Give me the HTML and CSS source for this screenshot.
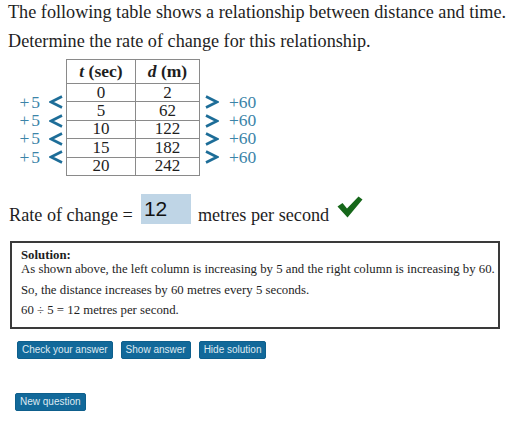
FILE: index.html
```html
<!DOCTYPE html>
<html>
<head>
<meta charset="utf-8">
<link rel="stylesheet" href="styles.css">
</head>
<body>
<div class="page">
  <p class="q q1">The following table shows a relationship between distance and time.</p>
  <p class="q q2">Determine the rate of change for this relationship.</p>

  <div class="tablewrap">
    <div class="side left">
      <div class="step"><span class="lbl">+5</span><svg class="chev" viewBox="0 0 14 14"><polyline points="13,1.5 2,7 13,12.5"/></svg></div>
      <div class="step"><span class="lbl">+5</span><svg class="chev" viewBox="0 0 14 14"><polyline points="13,1.5 2,7 13,12.5"/></svg></div>
      <div class="step"><span class="lbl">+5</span><svg class="chev" viewBox="0 0 14 14"><polyline points="13,1.5 2,7 13,12.5"/></svg></div>
      <div class="step"><span class="lbl">+5</span><svg class="chev" viewBox="0 0 14 14"><polyline points="13,1.5 2,7 13,12.5"/></svg></div>
    </div>
    <table class="data">
      <thead>
        <tr><th><i>t</i> (sec)</th><th><i>d</i> (m)</th></tr>
      </thead>
      <tbody>
        <tr><td>0</td><td>2</td></tr>
        <tr><td>5</td><td>62</td></tr>
        <tr><td>10</td><td>122</td></tr>
        <tr><td>15</td><td>182</td></tr>
        <tr><td>20</td><td>242</td></tr>
      </tbody>
    </table>
    <div class="side right">
      <div class="step"><svg class="chev" viewBox="0 0 14 14"><polyline points="1,1.5 12,7 1,12.5"/></svg><span class="lbl">+60</span></div>
      <div class="step"><svg class="chev" viewBox="0 0 14 14"><polyline points="1,1.5 12,7 1,12.5"/></svg><span class="lbl">+60</span></div>
      <div class="step"><svg class="chev" viewBox="0 0 14 14"><polyline points="1,1.5 12,7 1,12.5"/></svg><span class="lbl">+60</span></div>
      <div class="step"><svg class="chev" viewBox="0 0 14 14"><polyline points="1,1.5 12,7 1,12.5"/></svg><span class="lbl">+60</span></div>
    </div>
  </div>

  <div class="rate">
    <span class="rtext">Rate of change =</span>
    <span class="answer">12</span>
    <span class="rtext">metres per second</span>
    <svg class="tick" viewBox="0 0 26 22"><path d="M0.5 10.5 L5.5 7 L10 12.5 L21.5 0.5 L25.5 3.5 L10.5 21.5 Z"/></svg>
  </div>

  <div class="solution">
    <div class="stitle">Solution:</div>
    <div class="sline">As shown above, the left column is increasing by 5 and the right column is increasing by 60.</div>
    <div class="sline">So, the distance increases by 60 metres every 5 seconds.</div>
    <div class="sline">60 ÷ 5 = 12 metres per second.</div>
  </div>

  <div class="buttons">
    <button class="btn">Check your answer</button>
    <button class="btn">Show answer</button>
    <button class="btn">Hide solution</button>
  </div>
  <div class="buttons second">
    <button class="btn">New question</button>
  </div>
</div>
</body>
</html>
```

FILE: styles.css
```css
html, body {
  margin: 0;
  padding: 0;
  background: #ffffff;
}
.page {
  padding: 0 0 0 8px;
  font-family: "Liberation Serif", "Times New Roman", serif;
  color: #1e1e1e;
}
.q {
  margin: 0;
  font-size: 18.2px;
  line-height: 24px;
}
.q2 { margin-top: 5px; }

.tablewrap {
  display: flex;
  margin-top: 6px;
  align-items: flex-start;
}
.side {
  display: flex;
  flex-direction: column;
  padding-top: 34px;
}
.side.left {
  width: 58px;
  align-items: flex-end;
}
.side.right {
  padding-left: 5px;
}
.step {
  height: 18.4px;
  display: flex;
  align-items: center;
}
.lbl {
  font-family: "Liberation Serif", "Times New Roman", serif;
  font-size: 17.5px;
  color: #3b84a8;
}
.left .lbl {
  margin-right: 7px;
  letter-spacing: 2px;
}
.right .lbl { margin-left: 10px; }
.chev {
  width: 14px;
  height: 14px;
}
.chev polyline {
  fill: none;
  stroke: #1d6d98;
  stroke-width: 2.6;
}
.left .chev { margin-right: 3px; }

.data {
  border-collapse: collapse;
  font-family: "Liberation Serif", "Times New Roman", serif;
  font-size: 17px;
}
.data th, .data td {
  border: 1px solid #8a8a8a;
  text-align: center;
  padding: 0;
  font-family: "Liberation Serif", "Times New Roman", serif;
  color: #1e1e1e;
}
.data th {
  height: 23px;
  font-weight: bold;
  font-size: 17.5px;
}
.data th:first-child { width: 68px; }
.data th:last-child { width: 63px; }
.data td {
  height: 17.4px;
  line-height: 16px;
  font-size: 17px;
}

.rate {
  display: flex;
  align-items: center;
  margin-top: 18px;
  margin-left: 1px;
  font-size: 18.2px;
}
.rtext {
  align-self: flex-end;
  line-height: 20px;
  margin-bottom: -1px;
}
.answer {
  width: 47px;
  height: 30px;
  background: #bfd5e6;
  margin-left: 8px;
  margin-right: 7px;
  padding-left: 3px;
  font-family: "Liberation Sans", Arial, sans-serif;
  font-size: 21px;
  line-height: 29px;
  color: #111;
}
.tick {
  width: 26px;
  height: 22px;
  margin-left: 8px;
  margin-top: -4px;
}
.tick path { fill: #16671a; }

.solution {
  margin-top: 17px;
  margin-left: 2px;
  width: 477px;
  border: 2px solid #3a3a3a;
  padding: 6px 0 10px 9px;
  font-size: 12.8px;
  color: #1e1e1e;
}
.stitle {
  font-weight: bold;
  line-height: 13px;
}
.sline {
  line-height: 14px;
  margin-bottom: 7px;
}
.sline + .sline + .sline { margin-top: -1px; margin-bottom: 0; }

.buttons {
  display: flex;
  gap: 8px;
  margin-top: 12px;
  margin-left: 9px;
}
.buttons.second {
  margin-top: 34px;
  margin-left: 7px;
}
.btn {
  background: #12699a;
  color: #dfeaf2;
  border: 1px solid #0e5f8c;
  border-radius: 2px;
  font-family: "Liberation Sans", Arial, sans-serif;
  font-size: 10px;
  height: 18px;
  padding: 0 4px;
  line-height: 16px;
}
```
